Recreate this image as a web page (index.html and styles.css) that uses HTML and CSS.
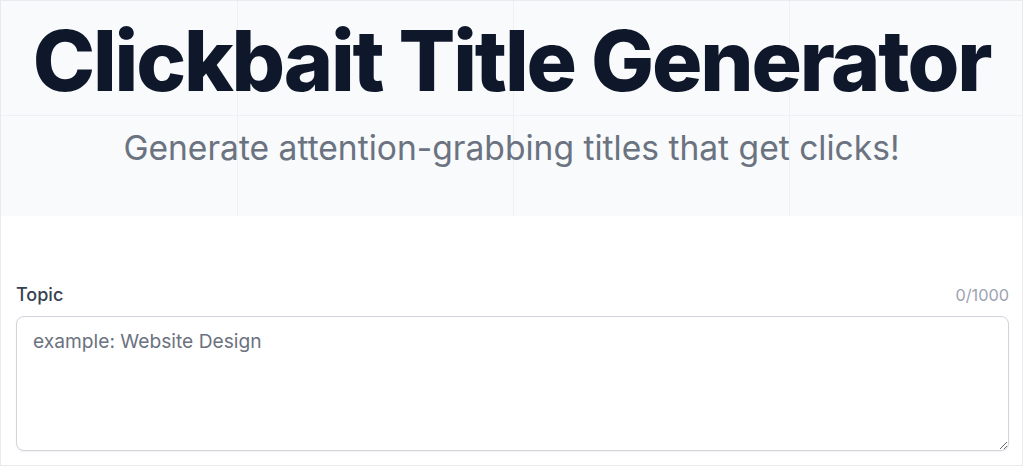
FILE: index.html
```html
<!DOCTYPE html>
<html lang="en">
<head>
<meta charset="utf-8">
<title>Clickbait Title Generator</title>
<link rel="stylesheet" href="styles.css">
</head>
<body>
<div class="frame">
  <header class="hero">
    <h1 class="hero-title">Clickbait Title Generator</h1>
    <p class="hero-sub">Generate attention-grabbing titles that get clicks!</p>
  </header>
  <main class="form">
    <div class="field-head">
      <label class="field-label" for="topic">Topic</label>
      <span class="field-count">0/1000</span>
    </div>
    <textarea id="topic" class="field-input" placeholder="example: Website Design"></textarea>
  </main>
</div>
</body>
</html>
```

FILE: styles.css
```css
* { box-sizing: border-box; }
html, body { margin: 0; padding: 0; background: #ffffff; }
body { font-family: Inter, "Noto Sans", sans-serif; }
.frame {
  width: 1023px;
  height: 466px;
  border: 1px solid #e8eaee;
  overflow: hidden;
  background: #ffffff;
}
.hero {
  height: 215px;
  background-color: #f8fafc;
  background-image:
    linear-gradient(to right, #eef0f3 1px, transparent 1px),
    linear-gradient(to bottom, #eef0f3 1px, transparent 1px);
  background-size: 276px 276px;
  background-position: 236px 114px;
  text-align: center;
  padding-top: 14px;
}
.hero-title {
  margin: 0;
  font-size: 84px;
  font-weight: 800;
  line-height: 92px;
  letter-spacing: -2.2px;
  color: #0f172a;
}
.hero-sub {
  margin: 21px 0 0;
  font-size: 33.6px;
  line-height: 40px;
  font-weight: 400;
  color: #6b7280;
}
.form {
  padding: 67px 13px 0 15px;
}
.field-head {
  display: flex;
  justify-content: space-between;
  align-items: baseline;
  margin-bottom: 9px;
}
.field-label {
  font-size: 18px;
  line-height: 24px;
  font-weight: 500;
  color: #374151;
}
.field-count {
  font-size: 16.3px;
  color: #9ca3af;
}
.field-input {
  display: block;
  width: 100%;
  height: 135px;
  border: 1px solid #d1d5db;
  border-radius: 8px;
  box-shadow: 0 1px 2px rgba(0,0,0,0.06);
  padding: 12px 16px;
  font-family: Inter, "Noto Sans", sans-serif;
  font-size: 19.2px;
  color: #111827;
  resize: vertical;
  background: #ffffff;
}
.field-input::placeholder { color: #6b7280; }
```
